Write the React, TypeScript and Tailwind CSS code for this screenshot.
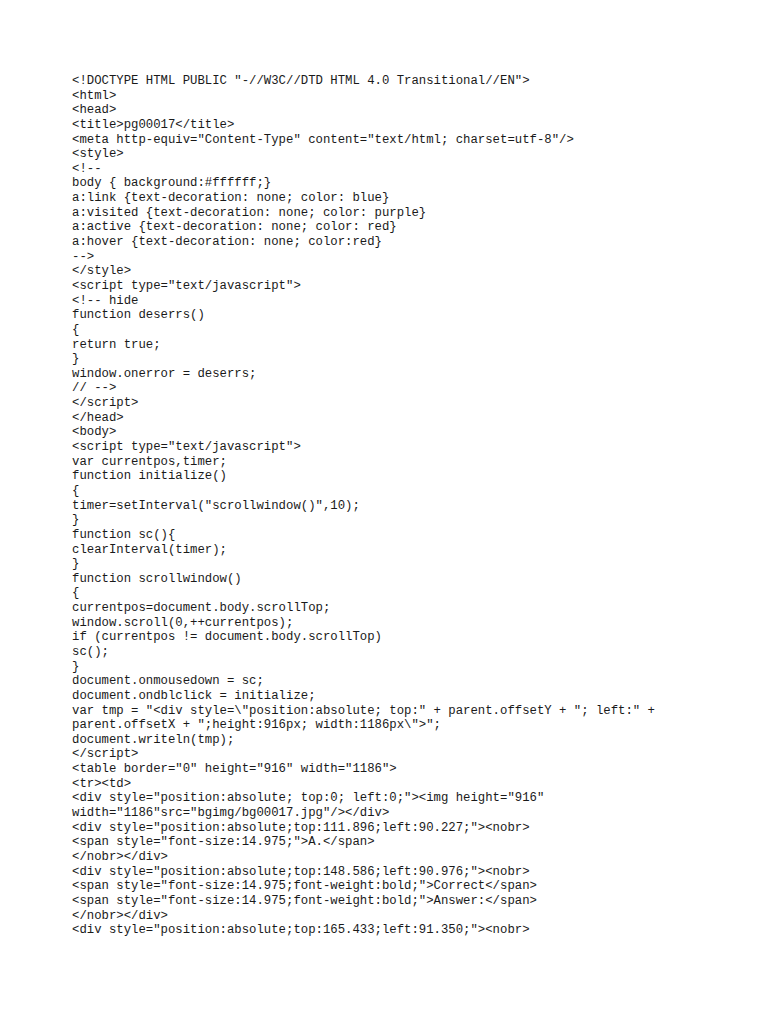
const lines = [
  '<!DOCTYPE HTML PUBLIC "-//W3C//DTD HTML 4.0 Transitional//EN">',
  '<html>',
  '<head>',
  '<title>pg00017</title>',
  '<meta http-equiv="Content-Type" content="text/html; charset=utf-8"/>',
  '<style>',
  '<!--',
  'body { background:#ffffff;}',
  'a:link {text-decoration: none; color: blue}',
  'a:visited {text-decoration: none; color: purple}',
  'a:active {text-decoration: none; color: red}',
  'a:hover {text-decoration: none; color:red}',
  '-->',
  '</style>',
  '<script type="text/javascript">',
  '<!-- hide',
  'function deserrs()',
  '{',
  'return true;',
  '}',
  'window.onerror = deserrs;',
  '// -->',
  '</script>',
  '</head>',
  '<body>',
  '<script type="text/javascript">',
  'var currentpos,timer;',
  'function initialize()',
  '{',
  'timer=setInterval("scrollwindow()",10);',
  '}',
  'function sc(){',
  'clearInterval(timer);',
  '}',
  'function scrollwindow()',
  '{',
  'currentpos=document.body.scrollTop;',
  'window.scroll(0,++currentpos);',
  'if (currentpos != document.body.scrollTop)',
  'sc();',
  '}',
  'document.onmousedown = sc;',
  'document.ondblclick = initialize;',
  'var tmp = "<div style=\\"position:absolute; top:" + parent.offsetY + "; left:" +',
  'parent.offsetX + ";height:916px; width:1186px\\">";',
  'document.writeln(tmp);',
  '</script>',
  '<table border="0" height="916" width="1186">',
  '<tr><td>',
  '<div style="position:absolute; top:0; left:0;"><img height="916"',
  'width="1186"src="bgimg/bg00017.jpg"/></div>',
  '<div style="position:absolute;top:111.896;left:90.227;"><nobr>',
  '<span style="font-size:14.975;">A.</span>',
  '</nobr></div>',
  '<div style="position:absolute;top:148.586;left:90.976;"><nobr>',
  '<span style="font-size:14.975;font-weight:bold;">Correct</span>',
  '<span style="font-size:14.975;font-weight:bold;">Answer:</span>',
  '</nobr></div>',
  '<div style="position:absolute;top:165.433;left:91.350;"><nobr>',
];

export default function App() {
  return (
    <div className="min-h-[1024px] w-[768px] bg-white pt-[74px] pl-[72px]">
      <div className="font-['Liberation_Mono',monospace] text-[12.3px] leading-[14.64px] text-[#1a1a1a] whitespace-pre">
        {lines.map((line, i) => (
          <div key={i}>{line}</div>
        ))}
      </div>
    </div>
  );
}
